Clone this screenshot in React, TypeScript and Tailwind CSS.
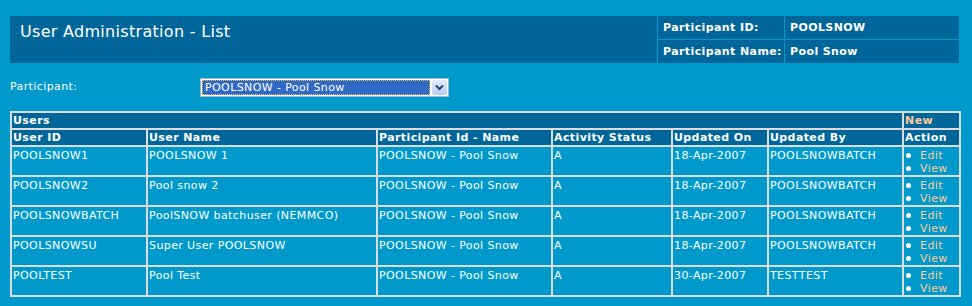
const USERS = [
  { id: "POOLSNOW1", name: "POOLSNOW 1", participant: "POOLSNOW - Pool Snow", status: "A", updatedOn: "18-Apr-2007", updatedBy: "POOLSNOWBATCH" },
  { id: "POOLSNOW2", name: "Pool snow 2", participant: "POOLSNOW - Pool Snow", status: "A", updatedOn: "18-Apr-2007", updatedBy: "POOLSNOWBATCH" },
  { id: "POOLSNOWBATCH", name: "PoolSNOW batchuser (NEMMCO)", participant: "POOLSNOW - Pool Snow", status: "A", updatedOn: "18-Apr-2007", updatedBy: "POOLSNOWBATCH" },
  { id: "POOLSNOWSU", name: "Super User POOLSNOW", participant: "POOLSNOW - Pool Snow", status: "A", updatedOn: "18-Apr-2007", updatedBy: "POOLSNOWBATCH" },
  { id: "POOLTEST", name: "Pool Test", participant: "POOLSNOW - Pool Snow", status: "A", updatedOn: "30-Apr-2007", updatedBy: "TESTTEST" },
];

const COLUMNS = ["User ID", "User Name", "Participant Id - Name", "Activity Status", "Updated On", "Updated By"];

function ActionLinks() {
  return (
    <div className="flex flex-col">
      {["Edit", "View"].map((label) => (
        <a key={label} href="#" className="flex h-[13px] items-center text-[#ffcc99]">
          <span className="ml-px mr-[9px] h-[5px] w-[5px] rounded-full bg-white" />
          {label}
        </a>
      ))}
    </div>
  );
}

export default function App() {
  return (
    <div
      className="min-h-[306px] bg-[#0099cc] px-[10px] pt-[16px] text-[11px] leading-[13px] tracking-[0.4px] text-white"
      style={{ fontFamily: '"DejaVu Sans", Verdana, sans-serif' }}
    >
      {/* page header */}
      <div className="flex w-[949px] gap-px">
        <div className="flex-1 bg-[#006699] pl-[10px] pt-[6px]">
          <h1 className="text-[16px] leading-[19px] tracking-[0.3px]">User Administration - List</h1>
        </div>
        <div className="grid w-[301px] grid-cols-[126px_174px] gap-px font-bold">
          <div className="flex h-[23px] items-center bg-[#006699] pl-[5px]">Participant ID:</div>
          <div className="flex h-[23px] items-center bg-[#006699] pl-[5px]">POOLSNOW</div>
          <div className="flex h-[23px] items-center bg-[#006699] pl-[5px]">Participant Name:</div>
          <div className="flex h-[23px] items-center bg-[#006699] pl-[5px]">Pool Snow</div>
        </div>
      </div>

      {/* participant filter */}
      <div className="mt-[15px] flex items-start">
        <label className="w-[190px] pt-[2px]">Participant:</label>
        <div className="flex h-[19px] w-[249px] items-center border border-[#a5b9cc] bg-white p-px">
          <div className="flex h-full flex-1 items-center border border-dotted border-[#e8c060] bg-[#316ac5] pl-[2px]">
            POOLSNOW - Pool Snow
          </div>
          <div className="ml-[2px] flex h-full w-[15px] items-center justify-center rounded-[2px] bg-gradient-to-b from-[#e3ebfd] to-[#b9cdf6]">
            <svg width="9" height="7" viewBox="0 0 9 7">
              <path d="M1 1.5 L4.5 5 L8 1.5" fill="none" stroke="#22436f" strokeWidth="2" />
            </svg>
          </div>
        </div>
      </div>

      {/* users table */}
      <table className="mt-[14px] w-[949px] table-fixed border-separate border-spacing-0 border border-[#dcdcdc]">
        <colgroup>
          <col className="w-[136px]" />
          <col className="w-[230px]" />
          <col className="w-[175px]" />
          <col className="w-[120px]" />
          <col className="w-[96px]" />
          <col className="w-[135px]" />
          <col className="w-[57px]" />
        </colgroup>
        <thead>
          <tr className="bg-[#006699]">
            <th colSpan={6} className="border border-[#dcdcdc] px-px py-px text-left font-bold">
              Users
            </th>
            <th className="border border-[#dcdcdc] px-px py-px text-left font-bold">
              <a href="#" className="text-[#ffcc99]">New</a>
            </th>
          </tr>
          <tr className="bg-[#006699]">
            {COLUMNS.map((col) => (
              <th key={col} className="whitespace-nowrap border border-[#dcdcdc] px-px py-px text-left font-bold">
                {col}
              </th>
            ))}
            <th className="border border-[#dcdcdc] px-px py-px text-left font-bold">Action</th>
          </tr>
        </thead>
        <tbody>
          {USERS.map((u) => (
            <tr key={u.id} className="align-top">
              <td className="border border-[#dcdcdc] px-px pt-[2px]">{u.id}</td>
              <td className="border border-[#dcdcdc] px-px pt-[2px]">{u.name}</td>
              <td className="border border-[#dcdcdc] px-px pt-[2px]">{u.participant}</td>
              <td className="border border-[#dcdcdc] px-px pt-[2px]">{u.status}</td>
              <td className="border border-[#dcdcdc] px-px pt-[2px]">{u.updatedOn}</td>
              <td className="border border-[#dcdcdc] px-px pt-[2px]">{u.updatedBy}</td>
              <td className="border border-[#dcdcdc] px-px pt-[2px] pb-0">
                <ActionLinks />
              </td>
            </tr>
          ))}
        </tbody>
      </table>
    </div>
  );
}
